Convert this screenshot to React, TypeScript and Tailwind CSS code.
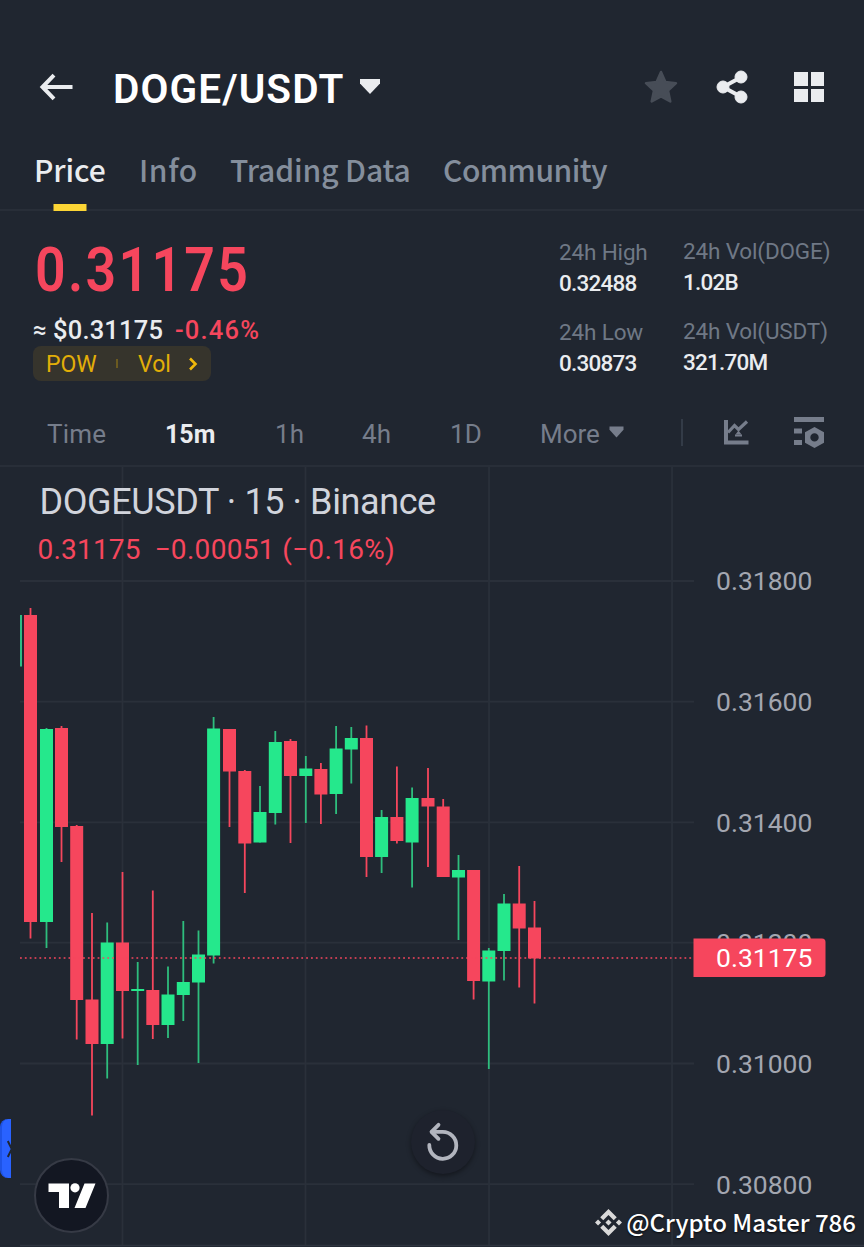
import { useState } from "react";
import { SiBinance } from "react-icons/si";

type Candle = {
  x: number;
  up: boolean;
  high: number;
  top: number;
  bottom: number;
  low: number;
};

const c = (x: number, up: boolean, high: number, top: number, bottom: number, low: number): Candle => ({
  x,
  up,
  high,
  top,
  bottom,
  low,
});

const CANDLES: Candle[] = [
  c(30.5, false, 608, 615, 922, 938.5),
  c(46.5, true, 728, 729, 922, 948),
  c(61.5, false, 726, 728, 827, 862),
  c(76.7, false, 825, 826, 1000, 1039.5),
  c(92, false, 913, 999.5, 1044, 1115.5),
  c(107.2, true, 922.5, 942.5, 1044, 1078.5),
  c(122.5, false, 872, 942.5, 991, 1038.5),
  c(137.7, true, 962, 989, 991, 1065),
  c(152.8, false, 890.5, 990, 1025, 1039),
  c(168, true, 966.5, 994.5, 1025, 1038),
  c(183.3, true, 921, 982, 995, 1021),
  c(198.5, true, 930.5, 954.5, 982.5, 1063),
  c(213.6, true, 717, 728.5, 955.5, 963.5),
  c(229.5, false, 729, 729, 771.5, 827),
  c(244.8, false, 770, 771, 843.5, 893),
  c(260, true, 786, 812, 842.5, 842.5),
  c(275.3, true, 731, 742, 813, 824.5),
  c(290.5, false, 739, 741, 776, 843),
  c(305.8, true, 756, 768.5, 776, 823),
  c(320.9, false, 763, 769, 794.5, 824),
  c(336.1, true, 726, 748.5, 794, 814),
  c(351.3, true, 727, 738, 749.5, 783.5),
  c(366.5, false, 725.5, 738, 857, 877),
  c(381.6, true, 810, 817, 857, 873),
  c(396.9, false, 766.5, 817, 841, 843.5),
  c(412.1, true, 787.5, 798, 842.5, 887.5),
  c(428, false, 768, 798, 806.5, 867),
  c(443.2, false, 799, 806.5, 877, 877),
  c(458.5, true, 855, 870, 877.5, 940),
  c(473.6, false, 870, 870, 981, 999.5),
  c(488.8, true, 948, 950.5, 981.5, 1069),
  c(504, true, 894, 903.5, 951, 980.5),
  c(519.2, false, 866, 903.5, 928.5, 987.5),
  c(534.5, false, 901, 927.5, 958.5, 1003.5),
];

const PRICE_LEVELS = [
  { y: 581, label: "0.31800" },
  { y: 701.7, label: "0.31600" },
  { y: 822.3, label: "0.31400" },
  { y: 942.7, label: "0.31200" },
  { y: 1063.5, label: "0.31000" },
  { y: 1184.2, label: "0.30800" },
];

const TIME_LINES = [122.5, 305.5, 489, 672];

const TABS = [
  { name: "Price", width: "w-[105px]", text: "tracking-[-0.100px]" },
  { name: "Info", width: "w-[91px]", text: "tracking-[0.600px]" },
  { name: "Trading Data", width: "w-[213px]", text: "tracking-[-0.100px]" },
  { name: "Community", width: "w-[170px]", text: "tracking-[-0.500px]" },
];

const INTERVALS = [
  { name: "Time", width: "w-[118px]" },
  { name: "15m", width: "w-[110px]" },
  { name: "1h", width: "w-[87px]" },
  { name: "4h", width: "w-[88px]" },
  { name: "1D", width: "w-[90px]" },
];

function Header() {
  return (
    <header className="flex h-[106px] items-center pl-[39px] pr-[40px]">
      <svg width="34" height="28" viewBox="0 0 34 28" fill="none" stroke="#eaecef" strokeWidth="4">
        <path d="M33.5 14H4M15 2.2 3.5 14 15 25.8" />
      </svg>
      <h1 className="ml-[40px] mt-[4px] w-[246px] whitespace-nowrap font-['Roboto',sans-serif] text-[40.500px] font-semibold leading-[48px] tracking-[1.100px] text-white">
        DOGE/USDT
      </h1>
      <svg className="-mt-[2px]" width="22" height="17" viewBox="0 0 22 17" fill="#eaecef">
        <path d="M1 1h20v4.5L11 16 1 5.500z" />
      </svg>
      <div className="ml-auto flex items-center">
        <svg width="34" height="34" viewBox="0 0 34 34" fill="#474d57" stroke="#474d57" strokeWidth="2.500" strokeLinejoin="round">
          <path d="m17 2 4.400 10L32 13.200l-8 7.300L26.300 31.500 17 26.300 7.700 31.500 10 20.500 2 13.200 12.600 12z" />
        </svg>
        <svg className="ml-[37px]" width="34" height="34" viewBox="0 0 34 34" fill="#eaecef" stroke="#eaecef">
          <path d="M26.500 7 8 17l18.500 10" fill="none" strokeWidth="4" />
          <circle cx="8" cy="17" r="6" />
          <circle cx="26" cy="7" r="6" />
          <circle cx="26" cy="27" r="6" />
        </svg>
        <div className="ml-[45px] grid grid-cols-2 gap-[3px]">
          <span className="size-[13.500px] bg-[#eaecef]" />
          <span className="size-[13.500px] bg-[#eaecef]" />
          <span className="size-[13.500px] bg-[#eaecef]" />
          <span className="size-[13.500px] bg-[#eaecef]" />
        </div>
      </div>
    </header>
  );
}

function Stat({ label, value }: { label: string; value: string }) {
  return (
    <div className="whitespace-nowrap">
      <p className="text-[22.500px] leading-[32px] tracking-[-0.150px] text-[#6f7885]">{label}</p>
      <p className="text-[22.500px] font-medium leading-[30px] tracking-[-0.800px] text-[#eaecef]">{value}</p>
    </div>
  );
}

function Ticker() {
  return (
    <section className="flex h-[191px] font-['Roboto',sans-serif]">
      <div className="w-[559px] pl-[33px] pt-[26px]">
        <p className="ml-[1.500px] origin-left scale-x-[0.88] text-[61px] font-semibold leading-[66px] tracking-[2.600px] text-[#f6465d]">
          0.31175
        </p>
        <p className="mt-[11px] flex text-[25.500px] font-medium leading-[32px] text-[#eaecef]">
          <span className="w-[20px] text-[24px]">≈</span>
          <span className="w-[122px] tracking-[0.200px]">$0.31175</span>
          <span className="tracking-[1.200px] text-[#f6465d]">-0.46%</span>
        </p>
        <div className="flex h-[35px] w-[178px] items-center rounded-[8px] bg-[#36342c] pl-[13px] text-[23px] text-[#e2ae08]">
          <span className="w-[70px] pt-[3px]">POW</span>
          <span className="h-[9px] w-[2px] bg-[#6b5a20]" />
          <span className="ml-[20px] w-[50px] pt-[3px]">Vol</span>
          <svg width="10" height="14" viewBox="0 0 10 14" fill="none" stroke="#f0b90b" strokeWidth="2.600">
            <path d="m2 1.500 5.500 5.500L2 12.500" />
          </svg>
        </div>
      </div>
      <div className="flex w-[124px] flex-col gap-[18px] pt-[25px]">
        <Stat label="24h High" value="0.32488" />
        <Stat label="24h Low" value="0.30873" />
      </div>
      <div className="flex flex-col gap-[18px] pt-[24px]">
        <Stat label="24h Vol(DOGE)" value="1.02B" />
        <Stat label="24h Vol(USDT)" value="321.70M" />
      </div>
    </section>
  );
}

function IntervalBar() {
  const [active, setActive] = useState("15m");

  return (
    <div className="flex h-[65px] items-center border-b-2 border-[#282e38] pl-[47px] font-['Roboto',sans-serif] text-[26px]">
      {INTERVALS.map((item) => (
        <button
          key={item.name}
          onClick={() => setActive(item.name)}
          className={`${item.width} pt-[2px] text-left ${
            active === item.name ? "text-[25px] font-bold text-[#eaecef]" : "tracking-[0.2px] text-[#767d8b]"
          }`}
        >
          {item.name}
        </button>
      ))}
      <button className="w-[69px] pt-[2px] text-left text-[#767d8b]">More</button>
      <svg className="-mt-[3px]" width="15" height="12" viewBox="0 0 15 12" fill="#767d8b">
        <path d="M.5.5h14v3.200L7.500 11.500l-7-7.800z" />
      </svg>
      <span className="-mt-[3px] ml-[57px] h-[27px] w-[2px] bg-[#333b47]" />
      <svg className="-mt-[3px] ml-[41px]" width="25" height="26" viewBox="0 0 25 26" fill="none" stroke="#767d8b" strokeWidth="4">
        <path d="M2 1v22.500h22.500" />
        <path d="m4 13.500 6.500-7 4 4L23 2.500" strokeWidth="3.200" />
        <path d="m14.500 11.500-3 4h6z" fill="#767d8b" stroke="none" />
        <path d="M11 16.500h7" strokeWidth="2" />
      </svg>
      <svg className="-mt-[3px] ml-[44px]" width="32" height="32" viewBox="0 0 32 32" fill="#767d8b">
        <path d="M1 1h30v5H1zM1 12.500h8v5H1zM1 24h8v5H1z" />
        <path fillRule="evenodd" d="m21.500 11 9.500 5.200v10.600L21.500 32 12 26.800V16.200zM21.500 17.200a4.200 4.200 0 1 0 0 8.400 4.200 4.200 0 0 0 0-8.400z" />
      </svg>
    </div>
  );
}

function Chart() {
  return (
    <main className="relative h-[780px] overflow-hidden font-['Roboto',sans-serif]">
      <svg className="block" width="864" height="780" viewBox="0 467 864 780">
        {PRICE_LEVELS.map((level) => (
          <line key={level.label} x1="20" x2="694" y1={level.y} y2={level.y} stroke="#2a303a" strokeWidth="1.800" />
        ))}
        {TIME_LINES.map((x) => (
          <line key={x} x1={x} x2={x} y1="467" y2="1245" stroke="#2a303a" strokeWidth="1.800" />
        ))}
        <line x1="20" x2="864" y1="1245.500" y2="1245.500" stroke="#2e343f" strokeWidth="1.500" />

        {/* candle cut off by the left edge of the pane */}
        <rect x="20" y="615" width="2" height="51.500" fill="#2ebd85" />
        {CANDLES.map((item) => (
          <g key={item.x}>
            <rect x={item.x - 0.9} y={item.high} width="1.800" height={item.low - item.high} fill={item.up ? "#2ebd7d" : "#f6465d"} />
            <rect x={item.x - 6.5} y={item.top} width="13" height={item.bottom - item.top} fill={item.up ? "#25e88c" : "#f6465d"} />
          </g>
        ))}
        <line x1="20" x2="694" y1="958" y2="958" stroke="#f6465d" strokeOpacity="0.75" strokeWidth="2" strokeDasharray="1.800 3.050" />

        {PRICE_LEVELS.map((level) => (
          <text key={level.label} x="716" y={level.y + 9.3} fontSize="26.500" fill="#a3a6b0">
            {level.label}
          </text>
        ))}
        <path d="M693.500 938.500h128.500a3.500 3.500 0 0 1 3.500 3.500v31.500a3.500 3.500 0 0 1-3.500 3.500H693.500z" fill="#f6465d" />
        <text x="716" y="967" fontSize="26.500" fill="#ffffff">
          0.31175
        </text>
      </svg>

      <div className="absolute left-[39.500px] top-[14px] whitespace-nowrap">
        <p className="text-[36px] leading-[42px] tracking-[-0.400px] text-[#d1d4dc]">DOGEUSDT · 15 · Binance</p>
        <p className="-ml-[2px] mt-[11px] flex text-[28px] leading-[32px] text-[#f6465d]">
          <span className="w-[117px] tracking-[0.200px]">0.31175</span>
          <span className="tracking-[0.320px]">−0.00051 (−0.16%)</span>
        </p>
      </div>

      <div className="absolute left-0 top-[652px] h-[59px] w-[11px] overflow-hidden rounded-l-[8px] border-l-2 border-[#1e53e5] bg-[#2962ff]">
        <svg className="ml-[5px] mt-[21px]" width="8" height="18" viewBox="0 0 8 18" fill="none" stroke="#202630" strokeWidth="2">
          <path d="m.8 1 4 8-4 8" />
        </svg>
      </div>

      <div className="absolute left-[34px] top-[691px] flex size-[75px] items-center justify-center rounded-full border-2 border-[#363a45] bg-[#131722]">
        <svg width="48" height="25" viewBox="0 0 48 25" fill="#ffffff">
          <path d="M.5.500h20.500v24.500h-10V9H.5zM36.500.500H47.500L37.500 25H26.500z" />
          <circle cx="27" cy="4.800" r="4.600" />
        </svg>
      </div>

      <div className="absolute left-[411px] top-[643px] flex size-[64px] items-center justify-center rounded-full bg-[#1e222d] shadow-[0_2px_5px_rgba(0,0,0,0.4)]">
        <svg width="34" height="40" viewBox="0 0 34 40" fill="none" stroke="#b2b5be" strokeWidth="3.800" strokeLinecap="round" strokeLinejoin="round">
          <path d="M3.300 23a13.500 13.500 0 1 0 13.500-13.200H6" />
          <path d="M12.500 2.800 5.500 9.800l7 7" />
        </svg>
      </div>

      <div className="absolute right-[8px] top-[739px] flex h-[32px] items-center whitespace-nowrap font-['Noto_Sans_CJK_SC',sans-serif] text-[24px] font-medium text-white [text-shadow:0_1px_2px_rgba(0,0,0,0.8)]">
        <SiBinance className="mr-[4px] size-[27px] text-[#d9d9d9]" />
        @Crypto Master 786
      </div>
    </main>
  );
}

export default function App() {
  const [tab, setTab] = useState("Price");

  return (
    <div className="h-[1247px] w-[864px] overflow-hidden bg-[#202630] pt-[34px] font-['Noto_Sans_CJK_SC',sans-serif]">
      <Header />
      <nav className="flex h-[71px] border-b-2 border-[#282e38] pl-[34px]">
        {TABS.map((item) => (
          <div key={item.name} className={`${item.width} shrink-0`}>
            <button
              onClick={() => setTab(item.name)}
              className={`relative h-[71px] whitespace-nowrap pb-[12px] text-[30px] font-medium ${item.text} ${
                tab === item.name ? "text-[#eaecef]" : "text-[#848e9c]"
              }`}
            >
              {item.name}
              {tab === item.name && (
                <span className="absolute bottom-0 left-1/2 h-[7px] w-[33px] -translate-x-1/2 bg-[#fcd535]" />
              )}
            </button>
          </div>
        ))}
      </nav>
      <Ticker />
      <IntervalBar />
      <Chart />
    </div>
  );
}
